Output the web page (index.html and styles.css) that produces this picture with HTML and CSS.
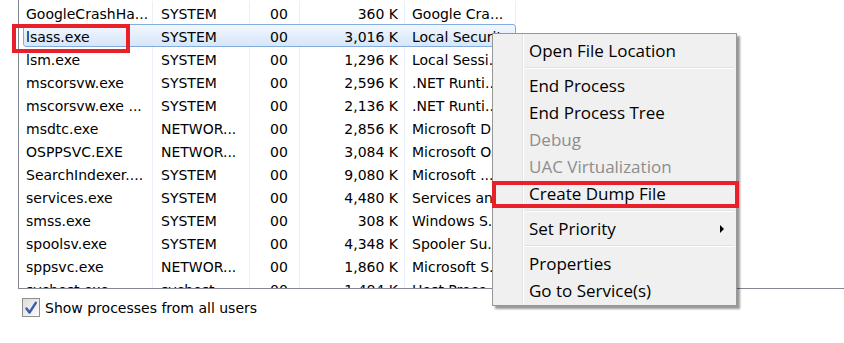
FILE: index.html
```html
<!DOCTYPE html>
<html lang="en">
<head>
  <meta charset="UTF-8" />
  <title>Windows Task Manager - Processes</title>
  <link rel="stylesheet" href="styles.css">
</head>
<body>
  <div class="process-list">
    <div class="row">
      <div class="cell name">GoogleCrashHa...</div>
      <div class="cell user">SYSTEM</div>
      <div class="cell cpu">00</div>
      <div class="cell mem">360 K</div>
      <div class="cell desc">Google Cra...</div>
    </div>
    <div class="row selected">
      <div class="cell name">lsass.exe</div>
      <div class="cell user">SYSTEM</div>
      <div class="cell cpu">00</div>
      <div class="cell mem">3,016 K</div>
      <div class="cell desc">Local Security Authority</div>
    </div>
    <div class="row">
      <div class="cell name">lsm.exe</div>
      <div class="cell user">SYSTEM</div>
      <div class="cell cpu">00</div>
      <div class="cell mem">1,296 K</div>
      <div class="cell desc">Local Sessi...</div>
    </div>
    <div class="row">
      <div class="cell name">mscorsvw.exe</div>
      <div class="cell user">SYSTEM</div>
      <div class="cell cpu">00</div>
      <div class="cell mem">2,596 K</div>
      <div class="cell desc">.NET Runti...</div>
    </div>
    <div class="row">
      <div class="cell name">mscorsvw.exe ...</div>
      <div class="cell user">SYSTEM</div>
      <div class="cell cpu">00</div>
      <div class="cell mem">2,136 K</div>
      <div class="cell desc">.NET Runti...</div>
    </div>
    <div class="row">
      <div class="cell name">msdtc.exe</div>
      <div class="cell user">NETWOR...</div>
      <div class="cell cpu">00</div>
      <div class="cell mem">2,856 K</div>
      <div class="cell desc">Microsoft D...</div>
    </div>
    <div class="row">
      <div class="cell name">OSPPSVC.EXE</div>
      <div class="cell user">NETWOR...</div>
      <div class="cell cpu">00</div>
      <div class="cell mem">3,084 K</div>
      <div class="cell desc">Microsoft O...</div>
    </div>
    <div class="row">
      <div class="cell name">SearchIndexer....</div>
      <div class="cell user">SYSTEM</div>
      <div class="cell cpu">00</div>
      <div class="cell mem">9,080 K</div>
      <div class="cell desc">Microsoft ...</div>
    </div>
    <div class="row">
      <div class="cell name">services.exe</div>
      <div class="cell user">SYSTEM</div>
      <div class="cell cpu">00</div>
      <div class="cell mem">4,480 K</div>
      <div class="cell desc">Services an...</div>
    </div>
    <div class="row">
      <div class="cell name">smss.exe</div>
      <div class="cell user">SYSTEM</div>
      <div class="cell cpu">00</div>
      <div class="cell mem">308 K</div>
      <div class="cell desc">Windows S...</div>
    </div>
    <div class="row">
      <div class="cell name">spoolsv.exe</div>
      <div class="cell user">SYSTEM</div>
      <div class="cell cpu">00</div>
      <div class="cell mem">4,348 K</div>
      <div class="cell desc">Spooler Su...</div>
    </div>
    <div class="row">
      <div class="cell name">sppsvc.exe</div>
      <div class="cell user">NETWOR...</div>
      <div class="cell cpu">00</div>
      <div class="cell mem">1,860 K</div>
      <div class="cell desc">Microsoft S...</div>
    </div>
    <div class="row">
      <div class="cell name">svchost.exe</div>
      <div class="cell user">svchost</div>
      <div class="cell cpu">00</div>
      <div class="cell mem">1,484 K</div>
      <div class="cell desc">Host Proce...</div>
    </div>
  </div>

  <label class="show-all">
    <span class="checkbox">
      <svg width="14" height="14" viewBox="0 0 14 14">
        <path d="M2.5 7.5 L5.5 11.5 L11.8 1.8" fill="none" stroke="#3d5ca8" stroke-width="2.4" stroke-linecap="round" stroke-linejoin="round"/>
      </svg>
    </span>
    Show processes from all users
  </label>

  <!-- context menu over the list -->
  <ul class="context-menu">
    <li class="menu-item">Open File Location</li>
    <li class="menu-sep"></li>
    <li class="menu-item">End Process</li>
    <li class="menu-item">End Process Tree</li>
    <li class="menu-item disabled">Debug</li>
    <li class="menu-item disabled">UAC Virtualization</li>
    <li class="menu-item">Create Dump File</li>
    <li class="menu-sep"></li>
    <li class="menu-item has-sub">Set Priority <span class="sub-arrow"></span></li>
    <li class="menu-sep"></li>
    <li class="menu-item">Properties</li>
    <li class="menu-item">Go to Service(s)</li>
  </ul>

  <!-- red highlight marks -->
  <div class="mark mark-process"></div>
  <div class="mark mark-dump"></div>
</body>
</html>
```

FILE: styles.css
```css
    /* Base Styles */
    body {
      font-family: 'DejaVu Sans', Tahoma, sans-serif;
      font-size: 14px;
      color: #000;
      background: #ffffff;
      margin: 0;
      position: relative;
      width: 844px;
      height: 343px;
      overflow: hidden;
    }

    /* Process List */
    .process-list {
      margin-left: 18px;
      height: 289px;
      padding-top: 1px;
      box-sizing: border-box;
      border-left: 1px solid #828790;
      border-bottom: 1px solid #828790;
      overflow: hidden;
    }

    .row {
      display: grid;
      grid-template-columns: 134px 97px 50px 105px 111px;
      width: 497px;
      height: 23px;
      position: relative;
    }

    .cell {
      position: relative;
      box-sizing: border-box;
      border-right: 1px solid #eaf0f8;
      white-space: nowrap;
      overflow: hidden;
      padding: 3px 7px 0;
      line-height: 20px;
    }

    .user {
      padding-left: 8px;
    }

    .cpu {
      padding-left: 20px;
    }

    .mem {
      text-align: right;
      padding-right: 6px;
    }

    /* Selected Row */
    .row.selected::before {
      content: "";
      position: absolute;
      left: 4px;
      right: 0;
      top: 0;
      bottom: 0;
      border: 1px solid #84acdd;
      border-radius: 3px;
      background: linear-gradient(#f2f7fe, #d6e6fa);
    }

    .row.selected .cell {
      border-right-color: transparent;
    }

    /* Checkbox */
    .show-all {
      display: flex;
      align-items: center;
      gap: 5px;
      margin: 9px 0 0 22px;
      font-size: 14px;
    }

    .checkbox {
      width: 16px;
      height: 17px;
      border: 1px solid #8e8f8f;
      background: linear-gradient(135deg, #dcdcdc, #fbfbfb);
      display: flex;
      align-items: center;
      justify-content: center;
    }

    /* Context Menu */
    .context-menu {
      position: absolute;
      left: 492px;
      top: 33px;
      width: 245px;
      box-sizing: border-box;
      margin: 0;
      padding: 3px 2px 1px;
      list-style: none;
      font-family: 'Open Sans', 'Noto Sans', sans-serif;
      font-size: 17px;
      background:
        linear-gradient(to right, transparent 29px, #e2e3e3 29px, #e2e3e3 30px, #ffffff 30px, #ffffff 31px, transparent 31px),
        #f0f0f0;
      border: 1px solid #979797;
      box-shadow: 3px 3px 2px rgba(0,0,0,0.4);
    }

    .menu-item {
      height: 27px;
      line-height: 27px;
      padding: 0 10px 0 34px;
      display: flex;
      align-items: center;
      justify-content: space-between;
    }

    .menu-item.disabled {
      color: #8d8d8d;
    }

    .menu-sep {
      height: 8px;
      margin-left: 30px;
      background: linear-gradient(transparent 3px, #e0e0e0 3px, #e0e0e0 4px, #ffffff 4px, #ffffff 5px, transparent 5px);
    }

    .sub-arrow {
      width: 0;
      height: 0;
      border-top: 4px solid transparent;
      border-bottom: 4px solid transparent;
      border-left: 4px solid #000;
    }

    /* Red Marks */
    .mark {
      position: absolute;
      box-sizing: border-box;
      border: 4px solid #e8202a;
    }

    .mark-process {
      left: 12px;
      top: 24px;
      width: 118px;
      height: 29px;
    }

    .mark-dump {
      left: 492px;
      top: 181px;
      width: 247px;
      height: 27px;
    }
```
